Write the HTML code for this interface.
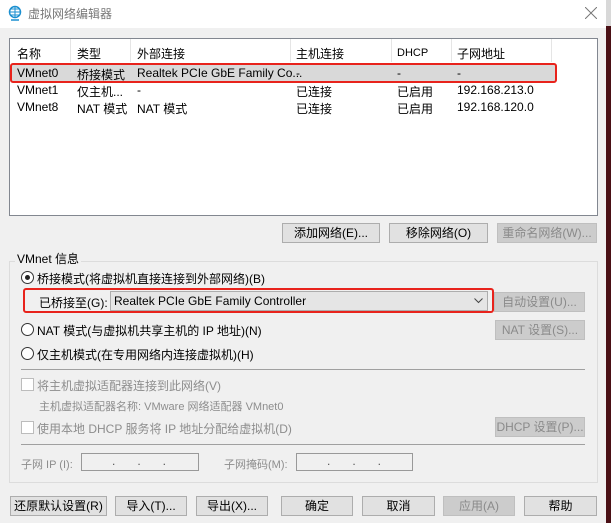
<!DOCTYPE html><html><head><meta charset="utf-8"><style>
*{margin:0;padding:0;box-sizing:border-box}
body{width:611px;height:523px;background:#f0f0f0;position:relative;overflow:hidden;font-family:"Liberation Sans","Noto Sans CJK SC",sans-serif;font-size:12px;color:#000}
.a{position:absolute;white-space:nowrap}
.btn{position:absolute;background:#e1e1e1;border:1px solid #adadad;text-align:center;line-height:18px}
.dis{color:#8a8a8a;background:#cccccc;border-color:#bfbfbf}
.rad{position:absolute;width:13px;height:13px;border:1px solid #333;border-radius:50%;background:#fff}
.chk{position:absolute;width:13px;height:13px;border:1px solid #bcbcbc;background:#fff}
.g{color:#8d8d8d}
</style></head><body>
<div class="a" style="left:0;top:0;width:606px;height:28px;background:#fff"></div>
<div class="a" style="left:606px;top:0;width:5px;height:26px;background:#d8d8d8"></div>
<div class="a" style="left:606px;top:26px;width:5px;height:497px;background:#4a1015"></div>
<svg class="a" style="left:8px;top:5px" width="14" height="16" viewBox="0 0 14 16"><circle cx="7" cy="7" r="5.5" fill="none" stroke="#1a8fd0" stroke-width="1.5"/><path d="M1.5 7h11M7 1.5v11M3 4h8M3 10h8" stroke="#1a8fd0" stroke-width="1"/><path d="M3 15h8" stroke="#1a8fd0" stroke-width="1.5"/></svg>
<div class="a" style="left:28px;top:5px;color:#777;font-size:12px">虚拟网络编辑器</div>
<svg class="a" style="left:585px;top:7px" width="12" height="12"><path d="M0 0L12 12M12 0L0 12" stroke="#777" stroke-width="1"/></svg>

<div class="a" style="left:9px;top:38px;width:589px;height:178px;background:#fff;border:1px solid #828790"></div>
<div class="a" style="left:70px;top:39px;width:1px;height:23px;background:#e5e5e5"></div>
<div class="a" style="left:130px;top:39px;width:1px;height:23px;background:#e5e5e5"></div>
<div class="a" style="left:290px;top:39px;width:1px;height:23px;background:#e5e5e5"></div>
<div class="a" style="left:391px;top:39px;width:1px;height:23px;background:#e5e5e5"></div>
<div class="a" style="left:451px;top:39px;width:1px;height:23px;background:#e5e5e5"></div>
<div class="a" style="left:551px;top:39px;width:1px;height:23px;background:#e5e5e5"></div>
<div class="a" style="left:17px;top:45px">名称</div><div class="a" style="left:77px;top:45px">类型</div><div class="a" style="left:137px;top:45px">外部连接</div><div class="a" style="left:296px;top:45px">主机连接</div><div class="a" style="left:397px;top:47px;font-size:11px">DHCP</div><div class="a" style="left:457px;top:45px">子网地址</div>
<div class="a" style="left:11px;top:64px;width:545px;height:18px;background:#d9d9d9"></div>
<div class="a" style="left:10px;top:63px;width:547px;height:20px;border:2px solid #e8231c;border-radius:3px"></div>
<div class="a" style="left:17px;top:66px">VMnet0</div><div class="a" style="left:77px;top:66px">桥接模式</div><div class="a" style="left:137px;top:66px">Realtek PCIe GbE Family Co...</div><div class="a" style="left:296px;top:66px">-</div><div class="a" style="left:397px;top:66px">-</div><div class="a" style="left:457px;top:66px">-</div>
<div class="a" style="left:17px;top:83px">VMnet1</div><div class="a" style="left:77px;top:83px">仅主机...</div><div class="a" style="left:137px;top:83px">-</div><div class="a" style="left:296px;top:83px">已连接</div><div class="a" style="left:397px;top:83px">已启用</div><div class="a" style="left:457px;top:83px">192.168.213.0</div>
<div class="a" style="left:17px;top:100px">VMnet8</div><div class="a" style="left:77px;top:100px">NAT 模式</div><div class="a" style="left:137px;top:100px">NAT 模式</div><div class="a" style="left:296px;top:100px">已连接</div><div class="a" style="left:397px;top:100px">已启用</div><div class="a" style="left:457px;top:100px">192.168.120.0</div>

<div class="btn" style="left:282px;top:223px;width:98px;height:20px">添加网络(E)...</div>
<div class="btn" style="left:389px;top:223px;width:99px;height:20px">移除网络(O)</div>
<div class="btn dis" style="left:497px;top:223px;width:100px;height:20px">重命名网络(W)...</div>

<div class="a" style="left:9px;top:261px;width:589px;height:222px;border:1px solid #dcdcdc"></div>
<div class="a" style="left:15px;top:250px;background:#f0f0f0;padding:0 2px">VMnet 信息</div>
<div class="rad" style="left:21px;top:271px"></div><div class="a" style="left:25px;top:275px;width:5px;height:5px;border-radius:50%;background:#222"></div>
<div class="a" style="left:37px;top:270px">桥接模式(将虚拟机直接连接到外部网络)(B)</div>
<div class="a" style="left:23px;top:288px;width:471px;height:25px;border:2px solid #e8231c;border-radius:3px"></div>
<div class="a" style="left:39px;top:294px">已桥接至(G):</div>
<div class="a" style="left:110px;top:291px;width:378px;height:20px;background:#e5e5e5;border:1px solid #adadad"></div>
<div class="a" style="left:114px;top:294px">Realtek PCIe GbE Family Controller</div>
<svg class="a" style="left:474px;top:298px" width="9" height="6"><path d="M0.5 0.5L4.5 4.5L8.5 0.5" fill="none" stroke="#444"/></svg>
<div class="btn dis" style="left:494px;top:292px;width:91px;height:20px">自动设置(U)...</div>
<div class="rad" style="left:21px;top:323px"></div>
<div class="a" style="left:37px;top:322px">NAT 模式(与虚拟机共享主机的 IP 地址)(N)</div>
<div class="btn dis" style="left:495px;top:320px;width:90px;height:20px">NAT 设置(S)...</div>
<div class="rad" style="left:21px;top:347px"></div>
<div class="a" style="left:37px;top:346px">仅主机模式(在专用网络内连接虚拟机)(H)</div>
<div class="a" style="left:21px;top:369px;width:564px;height:1px;background:#a0a0a0"></div>
<div class="chk" style="left:21px;top:378px"></div>
<div class="a g" style="left:37px;top:377px">将主机虚拟适配器连接到此网络(V)</div>
<div class="a g" style="left:39px;top:398px;font-size:11px">主机虚拟适配器名称: VMware 网络适配器 VMnet0</div>
<div class="chk" style="left:21px;top:421px"></div>
<div class="a g" style="left:37px;top:420px">使用本地 DHCP 服务将 IP 地址分配给虚拟机(D)</div>
<div class="btn dis" style="left:495px;top:417px;width:90px;height:20px">DHCP 设置(P)...</div>
<div class="a" style="left:21px;top:444px;width:564px;height:1px;background:#a0a0a0"></div>
<div class="a g" style="left:21px;top:456px;font-size:11px">子网 IP (I):</div>
<div class="a" style="left:81px;top:453px;width:118px;height:18px;border:1px solid #999;background:#f0f0f0;color:#555;padding-left:30px;letter-spacing:22px">...</div>
<div class="a g" style="left:224px;top:456px;font-size:11px">子网掩码(M):</div>
<div class="a" style="left:296px;top:453px;width:117px;height:18px;border:1px solid #999;background:#f0f0f0;color:#555;padding-left:30px;letter-spacing:22px">...</div>

<div class="btn" style="left:10px;top:496px;width:97px;height:20px">还原默认设置(R)</div>
<div class="btn" style="left:115px;top:496px;width:72px;height:20px">导入(T)...</div>
<div class="btn" style="left:196px;top:496px;width:72px;height:20px">导出(X)...</div>
<div class="btn" style="left:281px;top:496px;width:72px;height:20px">确定</div>
<div class="btn" style="left:362px;top:496px;width:73px;height:20px">取消</div>
<div class="btn dis" style="left:443px;top:496px;width:72px;height:20px">应用(A)</div>
<div class="btn" style="left:524px;top:496px;width:73px;height:20px">帮助</div>
</body></html>
